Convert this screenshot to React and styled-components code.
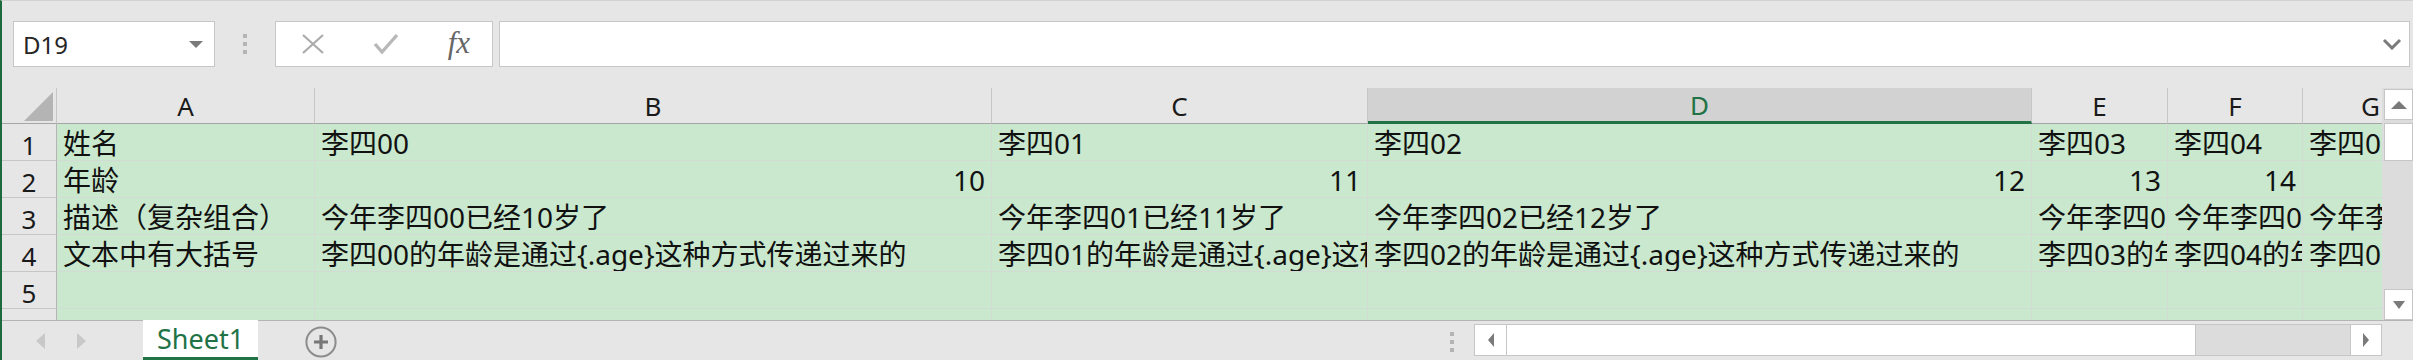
import styled, { createGlobalStyle } from 'styled-components';

const GlobalStyle = createGlobalStyle`
  html, body {
    margin: 0;
    padding: 0;
    background: #e6e6e6;
    overflow: hidden;
  }
  * { box-sizing: border-box; }
`

const FONT = `"Noto Sans", "Noto Sans CJK SC", sans-serif`
const GREEN = '#217346'

const columns = [
    { key: 'A', width: 258 },
    { key: 'B', width: 677 },
    { key: 'C', width: 376 },
    { key: 'D', width: 664, selected: true },
    { key: 'E', width: 136 },
    { key: 'F', width: 135 },
    { key: 'G', width: 136 },
]

const people = [0, 1, 2, 3, 4, 5]
const pad = (n) => String(n).padStart(2, '0')

const rows = [
    ['姓名', ...people.map((i) => '李四' + pad(i))],
    ['年龄', ...people.map((i) => 10 + i)],
    ['描述（复杂组合）', ...people.map((i) => `今年李四${pad(i)}已经${10 + i}岁了`)],
    ['文本中有大括号', ...people.map((i) => `李四${pad(i)}的年龄是通过{.age}这种方式传递过来的`)],
    [],
    [],
]

function App() {
    return (
        <Window>
            <GlobalStyle />
            <FormulaBar>
                <NameBox>
                    <span>D19</span>
                    <DropTriangle />
                </NameBox>
                <Grip>
                    <i /><i /><i />
                </Grip>
                <ButtonGroup>
                    <svg width="24" height="20" viewBox="0 0 24 20">
                        <path d="M2 1 L22 19 M22 1 L2 19" stroke="#ababab" strokeWidth="2.2" fill="none" />
                    </svg>
                    <svg width="26" height="22" viewBox="0 0 26 22">
                        <path d="M2 11 L9 19 L24 2" stroke="#b8b8b8" strokeWidth="3.4" fill="none" />
                    </svg>
                    <Fx>fx</Fx>
                </ButtonGroup>
                <FormulaInput>
                    <svg width="20" height="12" viewBox="0 0 20 12">
                        <path d="M2 2 L10 10 L18 2" stroke="#7a7a7a" strokeWidth="3" fill="none" />
                    </svg>
                </FormulaInput>
            </FormulaBar>

            <Sheet>
                <GridArea>
                    <Grid $columns={columns.map((c) => c.width)}>
                        <CornerCell><CornerTriangle /></CornerCell>
                        {columns.map((c) => (
                            <ColumnHeader key={c.key} $selected={c.selected}>{c.key}</ColumnHeader>
                        ))}
                        {rows.map((row, r) => (
                            <Row key={r}>
                                <RowHeader>{r + 1}</RowHeader>
                                {columns.map((c, ci) => {
                                    const value = row[ci]
                                    return (
                                        <Cell key={c.key} $numeric={typeof value === 'number'}>
                                            {value}
                                        </Cell>
                                    )
                                })}
                            </Row>
                        ))}
                    </Grid>
                </GridArea>
                <VScroll>
                    <ScrollButton>
                        <svg width="16" height="10" viewBox="0 0 16 10"><path d="M0 9 L8 1 L16 9 Z" fill="#7a7a7a" /></svg>
                    </ScrollButton>
                    <VThumb />
                    <ScrollButton $end>
                        <svg width="12" height="10" viewBox="0 0 12 10"><path d="M0 1 L12 1 L6 9 Z" fill="#7a7a7a" /></svg>
                    </ScrollButton>
                </VScroll>
            </Sheet>

            <BottomBar>
                <TabNav>
                    <svg width="9" height="16" viewBox="0 0 9 16"><path d="M9 0 L0 8 L9 16 Z" fill="#c8c8c8" /></svg>
                    <svg width="9" height="16" viewBox="0 0 9 16"><path d="M0 0 L9 8 L0 16 Z" fill="#c8c8c8" /></svg>
                </TabNav>
                <SheetTab>Sheet1</SheetTab>
                <AddSheet>
                    <svg width="32" height="32" viewBox="0 0 32 32">
                        <circle cx="16" cy="16" r="14.6" stroke="#8c8c8c" strokeWidth="2" fill="none" />
                        <path d="M16 9 V23 M9 16 H23" stroke="#777" strokeWidth="3.2" />
                    </svg>
                </AddSheet>
                <Spacer />
                <Grip $small>
                    <i /><i /><i />
                </Grip>
                <HScroll>
                    <HButton>
                        <svg width="6" height="14" viewBox="0 0 6 14"><path d="M6 0 L0 7 L6 14 Z" fill="#7a7a7a" /></svg>
                    </HButton>
                    <HThumb />
                    <HTrack />
                    <HButton>
                        <svg width="6" height="14" viewBox="0 0 6 14"><path d="M0 0 L6 7 L0 14 Z" fill="#7a7a7a" /></svg>
                    </HButton>
                </HScroll>
            </BottomBar>
        </Window>
    )
}

const Window = styled.div`
    width: 2413px;
    height: 360px;
    display: flex;
    flex-direction: column;
    border-left: 2px solid #1d6a3e;
    border-top: 1px solid #d2d2d2;
    background: #e6e6e6;
    font-family: ${FONT};
    color: #1a1a1a;
    overflow: hidden;
`

const FormulaBar = styled.div`
    height: 87px;
    flex: none;
    display: flex;
    align-items: flex-start;
    padding: 20px 3px 0 11px;
`

const Box = styled.div`
    height: 46px;
    background: #fff;
    border: 1px solid #c6c6c6;
`

const NameBox = styled(Box)`
    width: 202px;
    display: flex;
    align-items: center;
    justify-content: space-between;
    padding: 0 11px 0 9px;
    font-size: 24px;
    color: #262626;
`

const DropTriangle = styled.div`
    width: 0;
    height: 0;
    border-left: 7px solid transparent;
    border-right: 7px solid transparent;
    border-top: 7px solid #7a7a7a;
`

const Grip = styled.div`
    display: flex;
    flex-direction: column;
    gap: 4px;
    margin: ${({ $small }) => $small ? '11px 20px 0 0' : '13px 28px 0 28px'};
    i {
        display: block;
        width: 4px;
        height: 4px;
        background: #b4b4b4;
    }
`

const ButtonGroup = styled(Box)`
    width: 218px;
    display: flex;
    align-items: center;
    padding: 0 22px 0 25px;
    justify-content: space-between;
`

const Fx = styled.span`
    font-family: "Liberation Serif", serif;
    font-style: italic;
    font-size: 31px;
    color: #666;
    line-height: 1;
    margin-top: -4px;
`

const FormulaInput = styled(Box)`
    flex: 1;
    margin-left: 6px;
    display: flex;
    align-items: center;
    justify-content: flex-end;
    padding-right: 7px;
`

const Sheet = styled.div`
    height: 232px;
    flex: none;
    display: flex;
`

const GridArea = styled.div`
    flex: 1;
    overflow: hidden;
`

const Grid = styled.div`
    display: grid;
    grid-template-columns: 55px ${({ $columns }) => $columns.map((w) => w + 'px').join(' ')};
    grid-template-rows: 36px;
    grid-auto-rows: 37px;
    font-size: 26px;
`

const Row = styled.div`
    display: contents;
`

const HeaderBase = styled.div`
    background: #e6e6e6;
    border-right: 1px solid #c6c6c6;
    display: flex;
    align-items: center;
    justify-content: center;
    white-space: nowrap;
    overflow: hidden;
`

const CornerCell = styled(HeaderBase)`
    border-bottom: 1px solid #a6a6a6;
    align-items: flex-end;
    justify-content: flex-end;
    padding: 0 3px 2px 0;
`

const CornerTriangle = styled.div`
    width: 29px;
    height: 29px;
    background: #b4b4b4;
    clip-path: polygon(100% 0, 100% 100%, 0 100%);
`

const ColumnHeader = styled(HeaderBase)`
    background: ${({ $selected }) => $selected ? '#d2d2d2' : '#e6e6e6'};
    color: ${({ $selected }) => $selected ? GREEN : '#1a1a1a'};
    border-bottom: ${({ $selected }) => $selected ? `3px solid ${GREEN}` : '1px solid #a6a6a6'};
    padding-top: ${({ $selected }) => $selected ? '1px' : '0'};
    line-height: 1;
`

const RowHeader = styled(HeaderBase)`
    border-right-color: #b4b4b4;
    border-bottom: 1px solid #c6c6c6;
    padding-top: 5px;
`

const Cell = styled.div`
    background: #c9e8cd;
    border-right: 1px solid #d3dcd4;
    border-bottom: 1px solid #d3dcd4;
    padding: 4px 6px 0 6px;
    font-size: 28px;
    line-height: 31px;
    white-space: nowrap;
    overflow: hidden;
    text-align: ${({ $numeric }) => $numeric ? 'right' : 'left'};
    color: #111;
`

const VScroll = styled.div`
    width: 31px;
    flex: none;
    display: flex;
    flex-direction: column;
    gap: 3px;
    padding: 1px 0 0 2px;
    background: #dcdcdc;
`

const ScrollButton = styled.div`
    height: 31px;
    flex: none;
    background: #fff;
    border: 1px solid #c6c6c6;
    display: flex;
    align-items: center;
    justify-content: center;
    margin-top: ${({ $end }) => $end ? 'auto' : '0'};
`

const VThumb = styled.div`
    height: 38px;
    background: #fff;
    border: 1px solid #c6c6c6;
`

const BottomBar = styled.div`
    height: 40px;
    flex: none;
    display: flex;
    align-items: stretch;
    border-top: 1px solid #b4b4b4;
    padding-right: 31px;
`

const TabNav = styled.div`
    display: flex;
    align-items: center;
    gap: 32px;
    padding: 0 0 0 34px;
    width: 141px;
`

const SheetTab = styled.div`
    width: 115px;
    margin-top: -1px;
    background: #fff;
    border-bottom: 3px solid ${GREEN};
    color: ${GREEN};
    font-size: 27px;
    display: flex;
    align-items: center;
    justify-content: center;
    line-height: 1;
`

const AddSheet = styled.div`
    display: flex;
    align-items: center;
    padding: 2px 0 0 47px;
`

const Spacer = styled.div`
    flex: 1;
`

const HScroll = styled.div`
    width: 908px;
    height: 32px;
    margin-top: 3px;
    display: flex;
    background: #dcdcdc;
    border: 1px solid #c6c6c6;
`

const HButton = styled.div`
    width: 31px;
    flex: none;
    background: #fff;
    display: flex;
    align-items: center;
    justify-content: center;
    &:last-child {
        border-left: 1px solid #c6c6c6;
    }
`

const HThumb = styled.div`
    width: 690px;
    flex: none;
    background: #fff;
    border: 1px solid #c6c6c6;
    border-width: 0 1px;
`

const HTrack = styled.div`
    flex: 1;
`

export default App
